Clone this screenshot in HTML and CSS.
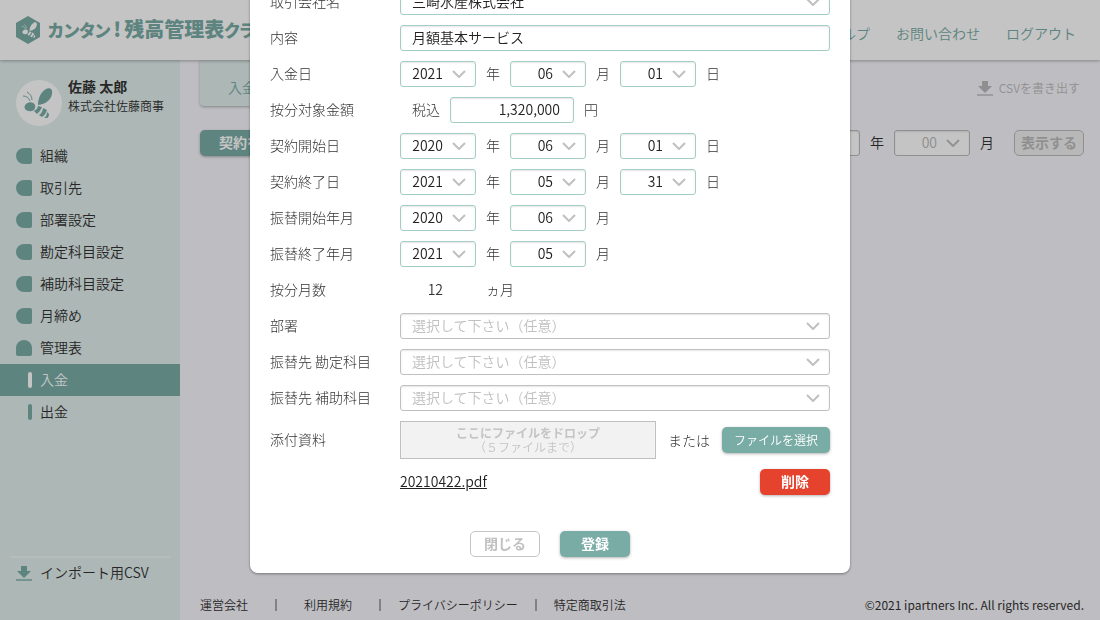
FILE: index.html
```html
<!DOCTYPE html>
<html lang="ja">
<head>
<meta charset="utf-8">
<title>カンタン!残高管理表クラウド</title>
<link rel="stylesheet" href="styles.css">
</head>
<body>
<svg class="defs" aria-hidden="true">
  <symbol id="chevron" viewBox="0 0 14 8"><path d="M1 1l6 6 6-6" fill="none" stroke="currentColor" stroke-width="2"/></symbol>
  <symbol id="download" viewBox="0 0 16 16"><path d="M5 1h6v5h4l-7 7-7-7h4z" fill="currentColor"/><path d="M0 14h16v2H0z" fill="currentColor" opacity=".7"/></symbol>
  <symbol id="bee" viewBox="0 0 46 46">
    <g fill="currentColor">
      <path d="M22 25c0-7 3-13 8-16 4-2 7 0 6 5-1 6-6 10-14 11z"/>
      <path d="M10 24c3-3 8-2 9 1 1 4-2 7-6 6-4 0-6-4-3-7z"/>
      <path d="M18 31c2-1 4-3 4-5l4 1c-1 3-3 5-5 7z"/>
      <path d="M23 35c2-1 4-4 4-7l4 2c-1 3-2 5-5 7z"/>
      <path d="M28 38c2-1 3-3 3-6l2 2c0 2-1 4-2 4z"/>
    </g>
    <path d="M7 16c4 0 6 2 7 5M11 12c3 2 5 4 5 8" fill="none" stroke="currentColor" stroke-width="1"/>
  </symbol>
</svg>

<header class="header">
  <a class="brand" href="#">
    <svg class="brand-mark" viewBox="0 0 24 28" aria-hidden="true"><path d="M12 0l12 7v14l-12 7-12-7V7z" fill="currentColor"/><use class="brand-bee" href="#bee" x="2" y="2" width="24" height="24"/></svg>
    <span class="brand-name"><span class="kana">カンタン</span><span class="mark">!</span>残高管理表<span class="kana">クラウド</span></span>
  </a>
  <nav class="header-nav"><a href="#">ヘルプ</a><a href="#">お問い合わせ</a><a href="#">ログアウト</a></nav>
</header>

<div class="body">
  <aside class="sidebar">
    <div class="user">
      <span class="avatar"><svg viewBox="0 0 46 46" aria-hidden="true"><use href="#bee"/></svg></span>
      <div><div class="user-name">佐藤 太郎</div><div class="user-company">株式会社佐藤商事</div></div>
    </div>
    <nav class="menu">
      <a href="#"><span>組織</span></a>
      <a href="#"><span>取引先</span></a>
      <a href="#"><span>部署設定</span></a>
      <a href="#"><span>勘定科目設定</span></a>
      <a href="#"><span>補助科目設定</span></a>
      <a href="#"><span>月締め</span></a>
      <a class="open" href="#"><span>管理表</span></a>
      <a class="sub active" href="#"><span>入金</span></a>
      <a class="sub" href="#"><span>出金</span></a>
    </nav>
    <a class="import" href="#"><svg class="dl" aria-hidden="true"><use href="#download"/></svg><span>インポート用CSV</span></a>
  </aside>

  <main class="main">
    <div class="topline">
      <a class="tab" href="#">入金</a>
      <button class="export" type="button" disabled><svg class="dl" aria-hidden="true"><use href="#download"/></svg>CSVを書き出す</button>
    </div>
    <div class="toolbar">
      <button class="btn primary wide" type="button">契約を追加</button>
      <div class="filter">
        <span class="select disabled"><select aria-label="表示年" disabled><option>0000</option></select><svg aria-hidden="true"><use href="#chevron"/></svg></span>
        <span class="unit">年</span>
        <span class="select disabled"><select aria-label="表示月" disabled><option>00</option></select><svg aria-hidden="true"><use href="#chevron"/></svg></span>
        <span class="unit">月</span>
        <button class="btn muted" type="button" disabled>表示する</button>
      </div>
    </div>
    <footer class="footer">
      <ul>
        <li><a href="#">運営会社</a></li>
        <li><a href="#">利用規約</a></li>
        <li><a href="#">プライバシーポリシー</a></li>
        <li><a href="#">特定商取引法</a></li>
      </ul>
      <small>©2021 ipartners Inc. All rights reserved.</small>
    </footer>
  </main>
</div>

<div class="overlay">
  <form class="modal" role="dialog" aria-modal="true" aria-label="入金の編集">
    <div class="row"><label for="company">取引会社名</label>
      <span class="select full"><select id="company"><option>三崎水産株式会社</option></select><svg aria-hidden="true"><use href="#chevron"/></svg></span></div>
    <div class="row"><label for="content">内容</label>
      <input class="text" id="content" type="text" value="月額基本サービス"></div>
    <div class="row"><label for="pay-y">入金日</label>
      <span class="select"><select id="pay-y"><option>2021</option></select><svg aria-hidden="true"><use href="#chevron"/></svg></span><span class="unit">年</span>
      <span class="select"><select aria-label="入金月"><option>06</option></select><svg aria-hidden="true"><use href="#chevron"/></svg></span><span class="unit">月</span>
      <span class="select"><select aria-label="入金日"><option>01</option></select><svg aria-hidden="true"><use href="#chevron"/></svg></span><span class="unit">日</span></div>
    <div class="row"><label for="amount">按分対象金額</label>
      <span class="tax">税込</span><input class="text amount" id="amount" type="text" value="1,320,000"><span class="unit">円</span></div>
    <div class="row"><label for="start-y">契約開始日</label>
      <span class="select"><select id="start-y"><option>2020</option></select><svg aria-hidden="true"><use href="#chevron"/></svg></span><span class="unit">年</span>
      <span class="select"><select aria-label="契約開始月"><option>06</option></select><svg aria-hidden="true"><use href="#chevron"/></svg></span><span class="unit">月</span>
      <span class="select"><select aria-label="契約開始日"><option>01</option></select><svg aria-hidden="true"><use href="#chevron"/></svg></span><span class="unit">日</span></div>
    <div class="row"><label for="end-y">契約終了日</label>
      <span class="select"><select id="end-y"><option>2021</option></select><svg aria-hidden="true"><use href="#chevron"/></svg></span><span class="unit">年</span>
      <span class="select"><select aria-label="契約終了月"><option>05</option></select><svg aria-hidden="true"><use href="#chevron"/></svg></span><span class="unit">月</span>
      <span class="select"><select aria-label="契約終了日"><option>31</option></select><svg aria-hidden="true"><use href="#chevron"/></svg></span><span class="unit">日</span></div>
    <div class="row"><label for="tr-start">振替開始年月</label>
      <span class="select"><select id="tr-start"><option>2020</option></select><svg aria-hidden="true"><use href="#chevron"/></svg></span><span class="unit">年</span>
      <span class="select"><select aria-label="振替開始月"><option>06</option></select><svg aria-hidden="true"><use href="#chevron"/></svg></span><span class="unit">月</span></div>
    <div class="row"><label for="tr-end">振替終了年月</label>
      <span class="select"><select id="tr-end"><option>2021</option></select><svg aria-hidden="true"><use href="#chevron"/></svg></span><span class="unit">年</span>
      <span class="select"><select aria-label="振替終了月"><option>05</option></select><svg aria-hidden="true"><use href="#chevron"/></svg></span><span class="unit">月</span></div>
    <div class="row"><label for="months">按分月数</label>
      <output class="months" id="months">12</output><span class="months-unit">ヵ月</span></div>
    <div class="row"><label for="dept">部署</label>
      <span class="select full empty"><select id="dept"><option>選択して下さい（任意）</option></select><svg aria-hidden="true"><use href="#chevron"/></svg></span></div>
    <div class="row"><label for="account">振替先 勘定科目</label>
      <span class="select full empty"><select id="account"><option>選択して下さい（任意）</option></select><svg aria-hidden="true"><use href="#chevron"/></svg></span></div>
    <div class="row"><label for="subaccount">振替先 補助科目</label>
      <span class="select full empty"><select id="subaccount"><option>選択して下さい（任意）</option></select><svg aria-hidden="true"><use href="#chevron"/></svg></span></div>
    <div class="row"><label for="pick">添付資料</label>
      <div class="drop"><b>ここにファイルをドロップ</b><span>（５ファイルまで）</span></div><span class="or">または</span><button class="btn primary small" id="pick" type="button">ファイルを選択</button></div>
    <div class="row file"><a href="#">20210422.pdf</a><button class="btn danger" type="button">削除</button></div>
    <div class="actions"><button class="btn outline" type="button">閉じる</button><button class="btn primary" type="submit">登録</button></div>
  </form>
</div>
</body>
</html>
```
FILE: styles.css
```css
* { box-sizing: border-box; }
body {
  margin: 0;
  min-height: 100vh;
  display: flex;
  flex-direction: column;
  overflow: hidden;
  background: #f8f7fd;
  color: #333;
  font: 350 14px/20px "Noto Sans CJK JP", "Noto Sans", sans-serif;
}
a { color: inherit; text-decoration: none; }
button, input, select { font: inherit; color: inherit; margin: 0; }
.defs { display: none; }

.header {
  position: relative;
  height: 60px;
  display: flex;
  align-items: center;
  justify-content: space-between;
  padding: 0 24px 0 16px;
  background: #fff;
  color: #7aaca6;
  box-shadow: 0 1px 3px rgba(0, 0, 0, .3);
}
.brand { display: flex; align-items: center; gap: 8px; white-space: nowrap; }
.brand-mark { width: 24px; height: 28px; }
.brand-bee { color: #fff; }
.brand-name { font-size: 20px; font-weight: 900; padding-bottom: 2px; }
.kana { font-size: 17px; font-feature-settings: "palt"; }
.mark { padding: 0 3px; }
.header-nav { display: flex; gap: 26px; padding-top: 6px; }

.body { flex: 1; display: flex; }
.sidebar {
  width: 180px;
  display: flex;
  flex-direction: column;
  padding: 20px 0 36px;
  background: #e2efed;
}
.user { display: flex; gap: 6px; padding: 0 16px; margin-bottom: 14px; white-space: nowrap; }
.avatar { width: 46px; height: 46px; border-radius: 50%; background: #fff; color: #7aaca6; }
.user-name { font-weight: 700; line-height: 12px; padding-bottom: 4px; }
.user-company { font-size: 12px; }
.menu a { display: flex; align-items: center; gap: 8px; height: 32px; padding-left: 16px; }
.menu a::before {
  content: "";
  width: 16px;
  height: 16px;
  border-radius: 8px 2px 2px 8px;
  background: #7aaca6;
}
.menu .open::before { border-radius: 8px 8px 2px 2px; }
.menu .sub { padding-left: 28px; }
.menu .sub::before { width: 4px; border-radius: 2px; }
.menu .active { background: #7aaca6; color: #fff; }
.menu .active::before { background: #fff; }
.menu span, .import span { padding-bottom: 2px; }
.import {
  display: flex;
  align-items: center;
  gap: 8px;
  margin: auto 10px 0;
  padding: 4px 6px 0;
  border-top: 2px solid #edf5f4;
}
.dl { width: 16px; height: 16px; color: #7aaca6; }

.main { flex: 1; display: flex; flex-direction: column; padding: 0 16px 5px 20px; }
.topline { display: flex; justify-content: space-between; align-items: flex-start; }
.tab {
  padding: 17px 28px 9px;
  border-radius: 0 0 4px 4px;
  background: #e2efed;
  color: #7aaca6;
  box-shadow: 0 1px 3px rgba(0, 0, 0, .3);
}
.export {
  display: flex;
  align-items: center;
  gap: 6px;
  padding: 18px 4px 0 0;
  border: 0;
  background: none;
  color: #bbb;
  font-size: 12px;
}
.export .dl { color: #bbb; }
.toolbar { display: flex; justify-content: space-between; margin-top: 24px; }
.filter { display: flex; }
.filter .btn { margin-left: 10px; }

.btn {
  width: 70px;
  height: 26px;
  padding: 0 0 2px;
  border: 0;
  border-radius: 5px;
  font-weight: 700;
  line-height: 22px;
  color: #fff;
}
.primary { background: #7aaca6; box-shadow: 0 1px 3px rgba(0, 0, 0, .3); }
.danger { background: #e5432e; box-shadow: 0 1px 3px rgba(0, 0, 0, .3); }
.outline { border: 1px solid #c4c4c4; background: #fff; color: #c0c0c0; }
.muted { border: 1px solid #bbb; background: #f0f0f0; color: #bbb; }
.wide { width: 108px; }
.small { width: 108px; padding-bottom: 0; font-size: 12px; font-weight: 350; }

.select { display: grid; width: 76px; height: 26px; align-items: center; }
.select select, .select svg { grid-area: 1 / 1; }
.select select {
  appearance: none;
  width: 100%;
  height: 26px;
  padding: 0 32px 2px 11px;
  text-align-last: right;
}
.select select, .text {
  border: 1px solid #a4cdc5;
  border-radius: 3px;
  background: #fff;
  color: #222;
  box-shadow: inset 0 1px 2px rgba(0, 0, 0, .1);
  line-height: 22px;
  opacity: 1;
}
.select svg {
  justify-self: end;
  width: 14px;
  height: 8px;
  margin-right: 10px;
  color: #c0c0c0;
  pointer-events: none;
}
.full { flex: 1; }
.full select { text-align-last: left; }
.empty select { border-color: #c0c0c0; color: #c0c0c0; }
.disabled select { border-color: #bbb; color: #bbb; }
.text { flex: 1; min-width: 0; height: 26px; padding: 0 11px 2px; }
.amount { flex: 0 0 124px; padding-right: 13px; text-align: right; }
.unit { width: 34px; text-align: center; line-height: 24px; }

.footer {
  display: flex;
  justify-content: space-between;
  align-items: center;
  margin: auto 0 0 -10px;
  font-size: 12px;
}
.footer small { font-size: 12px; font-weight: 400; }
.footer ul { display: flex; margin: 0; padding: 0; list-style: none; }
.footer li { display: flex; align-items: center; }
.footer li a { min-width: 68px; text-align: center; }
.footer li + li::before {
  content: "";
  width: 2px;
  height: 12px;
  margin: 0 17px;
  background: #aaa;
}

.overlay {
  position: fixed;
  inset: 0;
  display: flex;
  align-items: flex-end;
  justify-content: center;
  padding-bottom: 47px;
  background: rgba(0, 0, 0, .23);
}
.modal {
  width: 600px;
  display: flex;
  flex-direction: column;
  gap: 10px;
  padding: 20px 20px 16px;
  border-radius: 8px;
  background: #fff;
  box-shadow: 0 1px 3px rgba(0, 0, 0, .4);
}
.row { display: flex; align-items: center; min-height: 26px; }
.row label { width: 130px; }
.row label, .row .unit, .tax, .or, .months, .months-unit, .file a { padding-bottom: 2px; }
.row label, .row .unit, .tax, .or, .months-unit { color: #333; font-weight: 300; }
.tax { width: 50px; padding-left: 12px; }
.months { width: 43px; text-align: right; }
.months-unit { padding-left: 43px; }
.drop {
  flex: 1;
  display: flex;
  flex-direction: column;
  align-items: center;
  justify-content: center;
  height: 38px;
  border: 1px solid #c0c0c0;
  background: #f2f2f2;
  color: #c4c4c4;
  font-size: 12px;
  line-height: 14px;
}
.or { padding: 0 12px; }
.file { justify-content: space-between; padding-left: 130px; }
.file a { color: #222; text-decoration: underline; }
.actions { display: flex; justify-content: center; gap: 20px; padding-top: 26px; }
```
